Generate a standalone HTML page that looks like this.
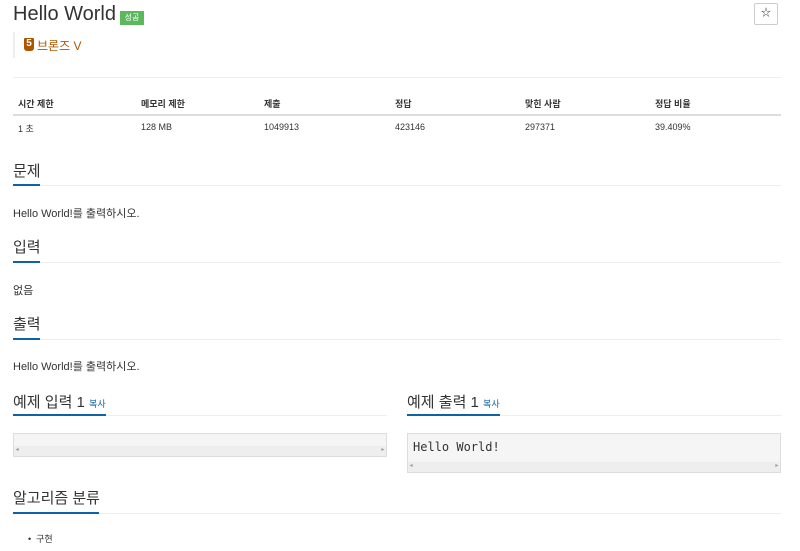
<!DOCTYPE html>
<html><head><meta charset="utf-8"><style>
*{box-sizing:border-box;margin:0;padding:0}
body{width:800px;height:551px;overflow:hidden;background:#fff;font-family:"Liberation Sans","Noto Sans CJK KR",sans-serif;color:#333;position:relative}
.abs{position:absolute}
h2{position:absolute;font-weight:normal;font-size:15px;color:#333;left:13px}
.hl{position:absolute;height:1px;background:#eee}
.bl{position:absolute;height:2px;background:#0c63a6;left:13px}
.th{font-weight:bold;font-size:9px;position:absolute;top:97px}
.td{font-size:9px;position:absolute;top:122px}
.p{position:absolute;left:13px;font-size:11px}
.copy{font-size:9px;color:#0c63a6}
.box{position:absolute;background:#f5f5f5;border:1px solid #ddd}
.sb{position:absolute;left:0;right:0;bottom:0;height:10px;background:#eee;font-size:6px;color:#999}
</style></head><body>
<div class="abs" style="left:13px;top:3px;font-size:20px;color:#333">Hello World</div>
<div class="abs" style="left:120px;top:11px;width:24px;height:14px;background:#5cb85c;color:#fff;font-size:8px;text-align:center;line-height:14px">성공</div>
<div class="abs" style="left:754px;top:3px;width:24px;height:22px;border:1px solid #ccc;border-radius:2px;text-align:center;line-height:20px;font-size:10px">☆</div>
<div class="abs" style="left:13px;top:32px;width:2px;height:26px;background:#eee"></div>
<div class="abs" style="left:24px;top:38px;width:10px;height:13px;background:#ad5600;color:#fff;font-size:10px;font-weight:bold;text-align:center;line-height:12px;border-radius:1px 1px 3px 3px">5</div>
<div class="abs" style="left:37px;top:37px;font-size:12px;color:#ad5600">브론즈 V</div>
<div class="hl" style="left:13px;right:19px;top:77px"></div>

<div class="th" style="left:18px">시간 제한</div>
<div class="th" style="left:141px">메모리 제한</div>
<div class="th" style="left:264px">제출</div>
<div class="th" style="left:395px">정답</div>
<div class="th" style="left:525px">맞힌 사람</div>
<div class="th" style="left:655px">정답 비율</div>
<div class="abs" style="left:13px;right:19px;top:114px;height:2px;background:#ddd"></div>
<div class="td" style="left:18px">1 초</div>
<div class="td" style="left:141px">128 MB</div>
<div class="td" style="left:264px">1049913</div>
<div class="td" style="left:395px">423146</div>
<div class="td" style="left:525px">297371</div>
<div class="td" style="left:655px">39.409%</div>

<h2 style="top:160px">문제</h2>
<div class="hl" style="left:13px;right:19px;top:185px"></div><div class="bl" style="top:184px;width:27px"></div>
<div class="p" style="top:205px">Hello World!를 출력하시오.</div>

<h2 style="top:236px">입력</h2>
<div class="hl" style="left:13px;right:19px;top:262px"></div><div class="bl" style="top:261px;width:27px"></div>
<div class="p" style="top:282px">없음</div>

<h2 style="top:313px">출력</h2>
<div class="hl" style="left:13px;right:19px;top:339px"></div><div class="bl" style="top:338px;width:27px"></div>
<div class="p" style="top:358px">Hello World!를 출력하시오.</div>

<h2 style="top:391px">예제 입력 1 <span class="copy">복사</span></h2>
<div class="hl" style="left:13px;width:374px;top:415px"></div><div class="bl" style="top:414px;width:93px"></div>
<div class="box" style="left:13px;top:433px;width:374px;height:24px"><div class="sb">&nbsp;◂<span style="float:right">▸&nbsp;</span></div></div>

<h2 style="top:391px;left:407px">예제 출력 1 <span class="copy">복사</span></h2>
<div class="hl" style="left:407px;right:19px;top:415px"></div><div class="bl" style="top:414px;left:407px;width:93px"></div>
<div class="box" style="left:407px;top:433px;width:374px;height:40px"><div style="position:absolute;left:5px;top:6px;font-family:'DejaVu Sans Mono','Liberation Mono',monospace;font-size:12px;color:#333">Hello World!</div><div class="sb">&nbsp;◂<span style="float:right">▸&nbsp;</span></div></div>

<h2 style="top:487px">알고리즘 분류</h2>
<div class="hl" style="left:13px;right:19px;top:513px"></div><div class="bl" style="top:512px;width:86px"></div>
<div class="abs" style="left:28px;top:532px;font-size:9px">•&nbsp;&nbsp;구현</div>
</body></html>
